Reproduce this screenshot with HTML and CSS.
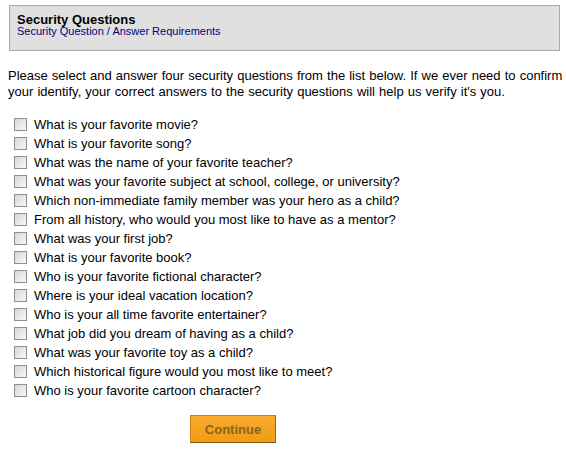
FILE: index.html
```html
<!DOCTYPE html>
<html>
<head>
<meta charset="utf-8">
<link rel="stylesheet" href="styles.css">
</head>
<body>
<div class="header">
  <div class="title">Security Questions</div>
  <div class="subtitle">Security Question / Answer Requirements</div>
</div>
<p class="intro">Please select and answer four security questions from the list below. If we ever need to confirm your identify, your correct answers to the security questions will help us verify it's you.</p>
<ul class="questions">
  <li><span class="box"></span>What is your favorite movie?</li>
  <li><span class="box"></span>What is your favorite song?</li>
  <li><span class="box"></span>What was the name of your favorite teacher?</li>
  <li><span class="box"></span>What was your favorite subject at school, college, or university?</li>
  <li><span class="box"></span>Which non-immediate family member was your hero as a child?</li>
  <li><span class="box"></span>From all history, who would you most like to have as a mentor?</li>
  <li><span class="box"></span>What was your first job?</li>
  <li><span class="box"></span>What is your favorite book?</li>
  <li><span class="box"></span>Who is your favorite fictional character?</li>
  <li><span class="box"></span>Where is your ideal vacation location?</li>
  <li><span class="box"></span>Who is your all time favorite entertainer?</li>
  <li><span class="box"></span>What job did you dream of having as a child?</li>
  <li><span class="box"></span>What was your favorite toy as a child?</li>
  <li><span class="box"></span>Which historical figure would you most like to meet?</li>
  <li><span class="box"></span>Who is your favorite cartoon character?</li>
</ul>
<div class="actions"><button class="continue">Continue</button></div>
</body>
</html>
```
FILE: styles.css
```css
body {
  margin: 0;
  background: #fff;
  font-family: Arial, "Liberation Sans", sans-serif;
  color: #000;
}
.header {
  margin: 5px 6px 0 9px;
  background: #e0e0e0;
  border: 1px solid #a9a9a9;
  padding: 7px 0 0 7px;
  box-sizing: border-box;
  height: 46px;
}
.title {
  font-size: 13px;
  font-weight: bold;
  line-height: 13px;
}
.subtitle {
  font-size: 11px;
  line-height: 11px;
  color: #000080;
}
.intro {
  margin: 17px 0 0 8px;
  font-size: 13px;
  line-height: 16px;
  word-spacing: 0.5px;
}
.questions {
  list-style: none;
  margin: 15px 0 0 0;
  padding: 0 0 0 14px;
}
.questions li {
  display: flex;
  align-items: center;
  height: 19px;
  font-size: 13px;
}
.box {
  width: 11px;
  height: 11px;
  border: 1px solid #8e8f8f;
  background: linear-gradient(135deg, #d6d6d6, #f8f8f8);
  margin-right: 7px;
  flex: none;
}
.actions {
  display: flex;
  justify-content: center;
  margin-top: 15px;
}
.continue {
  margin-left: -100px;
  width: 86px;
  height: 28px;
  background: linear-gradient(#f7ab2e, #f29c12);
  border: 1px solid #c98214;
  border-bottom-color: #7f5410;
  border-right-color: #9a6612;
  color: #866326;
  font-family: Arial, "Liberation Sans", sans-serif;
  font-weight: bold;
  font-size: 13px;
  padding: 0;
}
```
